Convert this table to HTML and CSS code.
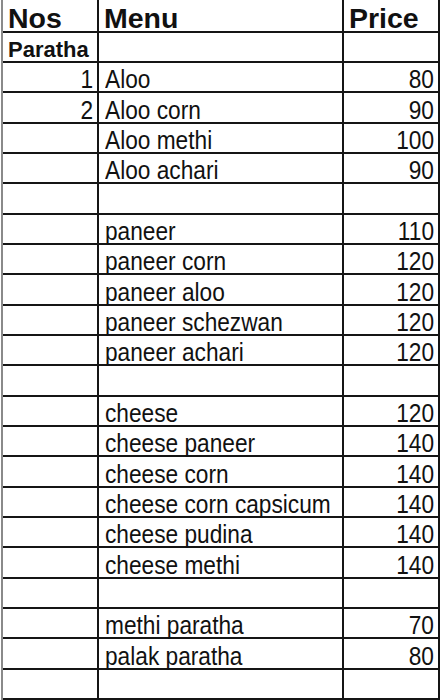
FILE: index.html
```html
<!DOCTYPE html>
<html>
<head>
<meta charset="utf-8">
<link rel="stylesheet" href="styles.css">
</head>
<body>
<table class="sheet">
  <colgroup><col class="c-nos"><col class="c-menu"><col class="c-price"></colgroup>
  <tr class="head"><td>Nos</td><td>Menu</td><td>Price</td></tr>
  <tr class="cat"><td>Paratha</td><td></td><td></td></tr>
  <tr class="row"><td class="num"><span class="t">1</span></td><td><span class="t">Aloo</span></td><td class="num"><span class="t">80</span></td></tr>
  <tr class="row"><td class="num"><span class="t">2</span></td><td><span class="t">Aloo corn</span></td><td class="num"><span class="t">90</span></td></tr>
  <tr class="row"><td></td><td><span class="t">Aloo methi</span></td><td class="num"><span class="t">100</span></td></tr>
  <tr class="row"><td></td><td><span class="t">Aloo achari</span></td><td class="num"><span class="t">90</span></td></tr>
  <tr class="row"><td></td><td></td><td></td></tr>
  <tr class="row"><td></td><td><span class="t">paneer</span></td><td class="num"><span class="t">110</span></td></tr>
  <tr class="row"><td></td><td><span class="t">paneer corn</span></td><td class="num"><span class="t">120</span></td></tr>
  <tr class="row"><td></td><td><span class="t">paneer aloo</span></td><td class="num"><span class="t">120</span></td></tr>
  <tr class="row"><td></td><td><span class="t">paneer schezwan</span></td><td class="num"><span class="t">120</span></td></tr>
  <tr class="row"><td></td><td><span class="t">paneer achari</span></td><td class="num"><span class="t">120</span></td></tr>
  <tr class="row"><td></td><td></td><td></td></tr>
  <tr class="row"><td></td><td><span class="t">cheese</span></td><td class="num"><span class="t">120</span></td></tr>
  <tr class="row"><td></td><td><span class="t">cheese paneer</span></td><td class="num"><span class="t">140</span></td></tr>
  <tr class="row"><td></td><td><span class="t">cheese corn</span></td><td class="num"><span class="t">140</span></td></tr>
  <tr class="row"><td></td><td><span class="t">cheese corn capsicum</span></td><td class="num"><span class="t">140</span></td></tr>
  <tr class="row"><td></td><td><span class="t">cheese pudina</span></td><td class="num"><span class="t">140</span></td></tr>
  <tr class="row"><td></td><td><span class="t">cheese methi</span></td><td class="num"><span class="t">140</span></td></tr>
  <tr class="row"><td></td><td></td><td></td></tr>
  <tr class="row"><td></td><td><span class="t">methi paratha</span></td><td class="num"><span class="t">70</span></td></tr>
  <tr class="row"><td></td><td><span class="t">palak paratha</span></td><td class="num"><span class="t">80</span></td></tr>
  <tr class="row"><td></td><td></td><td></td></tr>
</table>
</body>
</html>
```
FILE: styles.css
```css
html, body {
  margin: 0;
  padding: 0;
  background: #ffffff;
}
body {
  font-family: "Liberation Sans", Arial, sans-serif;
  color: #111111;
  width: 442px;
  height: 700px;
  overflow: hidden;
}
.sheet {
  margin-left: 1px;
  border-collapse: separate;
  border-spacing: 0;
  table-layout: fixed;
  width: 439px;
  border-left: 2px solid #8a8a8a;
}
.c-nos { width: 96px; }
.c-menu { width: 245px; }
.c-price { width: 96px; }
.sheet td {
  box-sizing: border-box;
  border-right: 2px solid #151515;
  border-bottom: 2px solid #151515;
  padding: 0 6px 0 6px;
  vertical-align: bottom;
  white-space: nowrap;
  overflow: visible;
}
.head td {
  height: 33px;
  font-weight: bold;
  font-size: 28.5px;
  line-height: 26px;
  padding-left: 5px;
}
.cat td {
  height: 30px;
  font-weight: bold;
  font-size: 22px;
  line-height: 22px;
  padding-left: 5px;
}
.row td {
  height: 30.33px;
  font-size: 22.7px;
  line-height: 20px;
  padding-left: 6px;
  padding-bottom: 1px;
}
.row td.num {
  text-align: right;
  padding-right: 4px;
}
.t {
  display: inline-block;
  transform: scaleY(1.1);
  transform-origin: 50% 85%;
}
```
